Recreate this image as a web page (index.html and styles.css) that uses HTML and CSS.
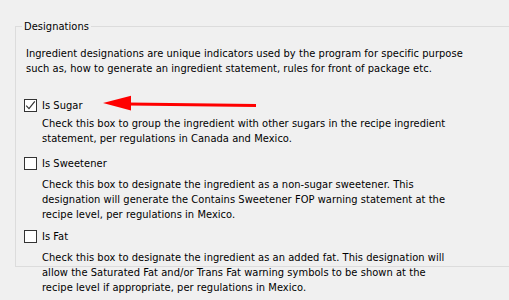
FILE: index.html
```html
<!DOCTYPE html>
<html lang="en">

<head>
    <meta charset="UTF-8">
    <title>Designations</title>
    <link rel="stylesheet" href="styles.css">
</head>

<body>
    <fieldset class="group">
        <legend>Designations</legend>
        <p class="intro">Ingredient designations are unique indicators used by the program for specific purpose<br>
            such as, how to generate an ingredient statement, rules for front of package etc.</p>

        <div class="option first">
            <label class="check"><span class="box checked">
                    <svg width="13" height="13" viewBox="0 0 13 13">
                        <path d="M2.2 6.6 L5 9.6 L10.8 2.4" fill="none" stroke="#333" stroke-width="1.2" />
                    </svg>
                </span>Is Sugar</label>
            <p class="desc">Check this box to group the ingredient with other sugars in the recipe ingredient<br>
                statement, per regulations in Canada and Mexico.</p>
        </div>

        <div class="option second">
            <label class="check"><span class="box"></span>Is Sweetener</label>
            <p class="desc">Check this box to designate the ingredient as a non-sugar sweetener. This<br>
                designation will generate the Contains Sweetener FOP warning statement at the<br>
                recipe level, per regulations in Mexico.</p>
        </div>

        <div class="option">
            <label class="check"><span class="box"></span>Is Fat</label>
            <p class="desc">Check this box to designate the ingredient as an added fat. This designation will<br>
                allow the Saturated Fat and/or Trans Fat warning symbols to be shown at the<br>
                recipe level if appropriate, per regulations in Mexico.</p>
        </div>
    </fieldset>

    <!-- callout arrow pointing at "Is Sugar" -->
    <svg class="arrow" width="160" height="20" viewBox="100 94 160 20">
        <line x1="128" y1="104" x2="256" y2="105.5" stroke="#f00" stroke-width="3.2" />
        <polygon points="103,103 131,95.8 131,110.6" fill="#f00" />
    </svg>
</body>

</html>
```

FILE: styles.css
```css
html,
body {
    overflow: hidden;
}

body {
    margin: 0;
    height: 300px;
    background-color: #f0f0f0;
    font-family: "DejaVu Sans Condensed", "DejaVu Sans", sans-serif;
    font-stretch: condensed;
    font-size: 11px;
    letter-spacing: 0.05px;
    line-height: 15px;
    color: #000;
    position: relative;
}

/* group box runs off the right side of the window */
.group {
    box-sizing: border-box;
    width: 494px;
    height: 248px;
    min-width: 0;
    margin: 19px 0 0 15px;
    padding: 0 0 0 10px;
    border: 1px solid #dcdcdc;
    border-right: none;
}

.group legend {
    margin-left: -4px;
    padding: 0 2px;
}

.intro {
    margin: 12px 0 0;
    white-space: nowrap;
}

.option {
    margin-top: 7px;
}

.option.first {
    margin-top: 22px;
}

.option.second {
    margin-top: 10px;
}

.check {
    display: flex;
    align-items: center;
    height: 15px;
    margin-left: -2px;
}

.box {
    box-sizing: border-box;
    width: 13px;
    height: 13px;
    margin-right: 5px;
    border: 1px solid #333;
    background-color: #fff;
}

.box svg {
    display: block;
    margin: -1px;
}

.desc {
    margin: 6px 0 0 16px;
    white-space: nowrap;
}

.first .desc {
    margin-top: 3px;
}

.arrow {
    position: absolute;
    left: 100px;
    top: 94px;
}
```
